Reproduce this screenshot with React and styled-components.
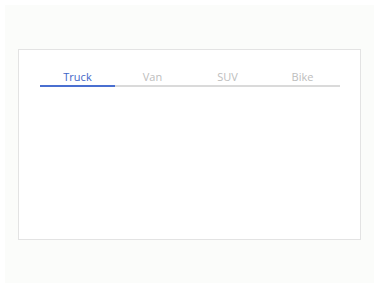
import React, { useState } from "react";
import styled, { createGlobalStyle } from "styled-components";

const GlobalStyle = createGlobalStyle`
  body {
    margin: 0;
    background: #ffffff;
    font-family: "Open Sans", "Noto Sans", sans-serif;
  }
`;

const Page = styled.div`
  padding: 5px 6px 6px 5px;
  box-sizing: border-box;
  height: 289px;
`;

const Panel = styled.div`
  background: #fbfcfa;
  height: 100%;
  box-sizing: border-box;
  padding: 44px 13px 0 13px;
`;

const Card = styled.div`
  background: #ffffff;
  border: 1px solid #e3e3e3;
  height: 191px;
  box-sizing: border-box;
  padding: 18px 20px 0 21px;
`;

const TabList = styled.div`
  display: flex;
  border-bottom: 2px solid #dadada;
`;

const Tab = styled.button`
  flex: 1;
  background: none;
  border: none;
  margin: 0 0 -2px;
  padding: 0;
  font-family: inherit;
  font-size: 11px;
  line-height: 17px;
  cursor: pointer;
  color: ${({ $active }) => ($active ? "#3f66c8" : "#bdbdbd")};
  border-bottom: 2px solid ${({ $active }) => ($active ? "#4a6fd0" : "transparent")};
`;

const tabs = ["Truck", "Van", "SUV", "Bike"];

export default function App() {
  const [active, setActive] = useState(0);
  return (
    <>
      <GlobalStyle />
      <Page>
        <Panel>
          <Card>
            <TabList>
              {tabs.map((t, i) => (
                <Tab key={t} $active={i === active} onClick={() => setActive(i)}>
                  {t}
                </Tab>
              ))}
            </TabList>
          </Card>
        </Panel>
      </Page>
    </>
  );
}
